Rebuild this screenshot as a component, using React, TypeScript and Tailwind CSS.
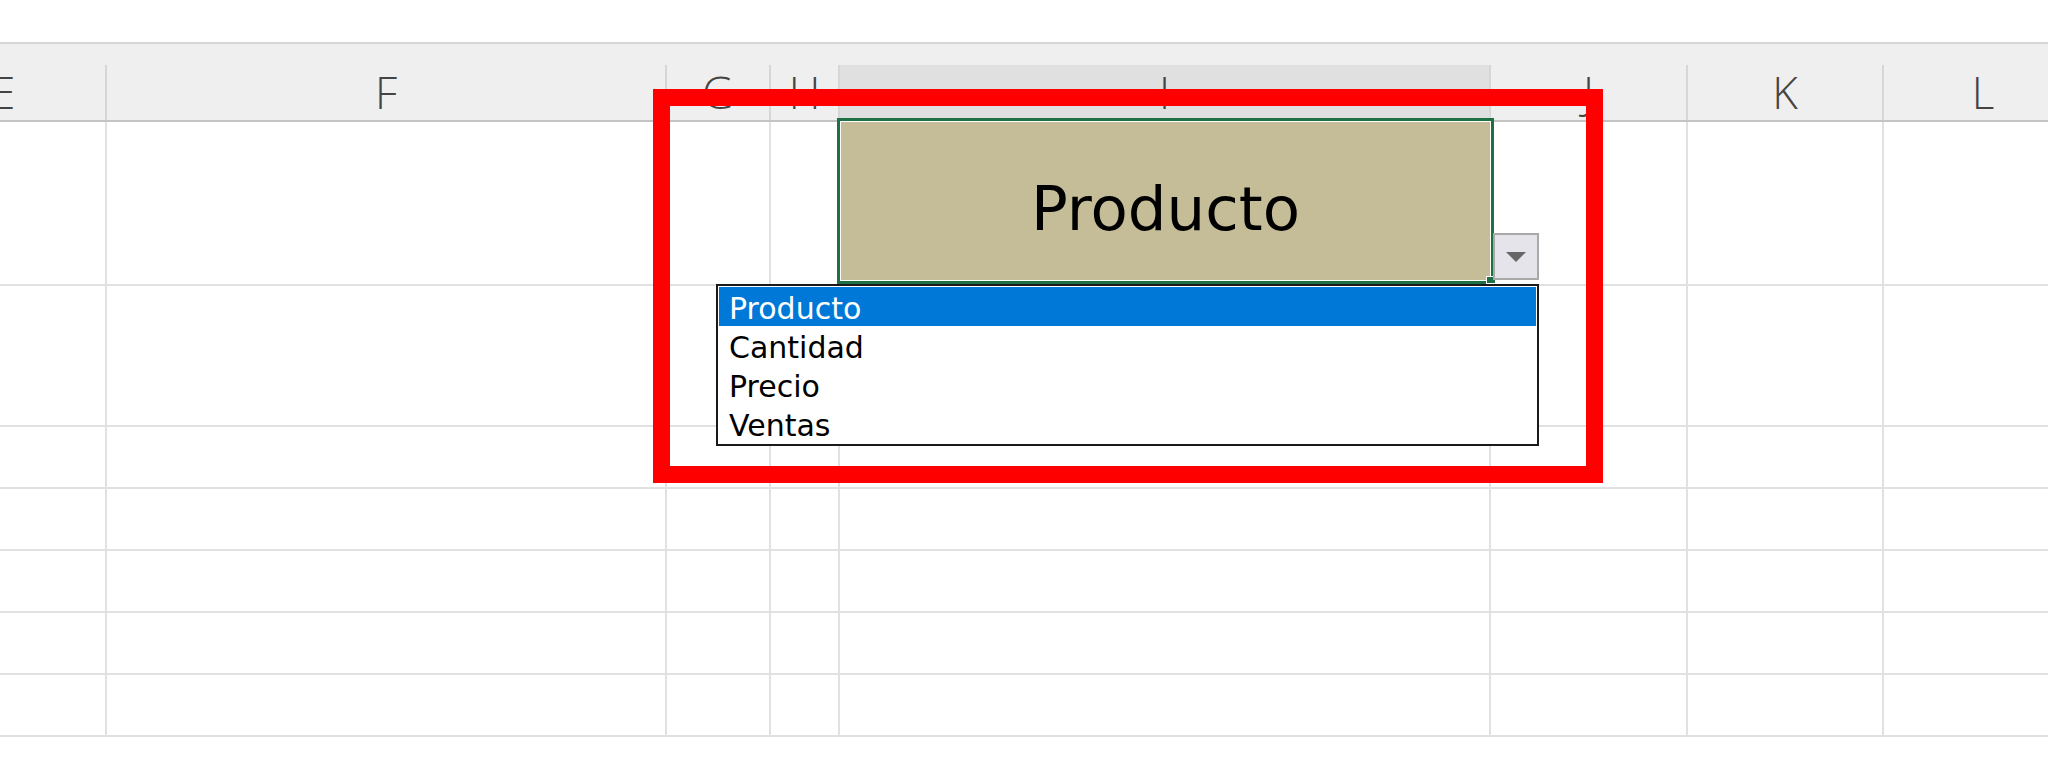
const columns = [
  { name: "E", width: "w-[107px]" },
  { name: "F", width: "w-[560px]" },
  { name: "G", width: "w-[104px]" },
  { name: "H", width: "w-[69px]" },
  { name: "I", width: "w-[651px]" },
  { name: "J", width: "w-[197px]" },
  { name: "K", width: "w-[196px]" },
  { name: "L", width: "w-[200px]" },
];

const rowHeights = ["h-[164px]", "h-[141px]", "h-[62px]", "h-[62px]", "h-[62px]", "h-[62px]", "h-[62px]"];

const options = ["Producto", "Cantidad", "Precio", "Ventas"];

function DropdownList() {
  return (
    <div className="absolute left-[-124px] top-[162px] z-20 w-[823px] h-[162px] border-2 border-[#1a1a1a] bg-white p-[1px] font-['DejaVu_Sans',sans-serif] text-[30px] text-black">
      {options.map((opt, i) => (
        <div
          key={opt}
          className={`h-[39px] pl-[10px] leading-[44px] ${i === 0 ? "bg-[#0078d7] text-white" : ""}`}
        >
          {opt}
        </div>
      ))}
    </div>
  );
}

function SelectedCell() {
  return (
    <>
      <div className="absolute left-[-3px] top-[-4px] z-10 w-[657px] h-[166px] border-[3px] border-[#1e7145]">
        <div className="h-full w-full border border-white bg-[#c4bd97] flex items-center justify-center pt-[14px] font-['DejaVu_Sans',sans-serif] text-[61px] leading-none text-black">
          Producto
        </div>
        <div className="absolute right-[-5px] bottom-[-3px] w-[10px] h-[8px] bg-[#1e7145] border border-white" />
      </div>
      {/* validation arrow */}
      <div className="absolute left-[653px] top-[111px] z-10 w-[46px] h-[47px] border-2 border-[#a9a9a9] bg-[#e4e4ea] flex items-center justify-center">
        <svg width="20" height="10" viewBox="0 0 20 10">
          <path d="M0 0 H20 L10 10 Z" fill="#666" />
        </svg>
      </div>
      <DropdownList />
    </>
  );
}

export default function App() {
  return (
    <div className="relative w-[2048px] h-[779px] overflow-hidden bg-white">
      <div className="h-[42px]" />
      {/* column headers */}
      <div className="flex h-[80px] border-t-2 border-b-2 border-t-[#d6d6d6] border-b-[#c4c4c4] bg-[#efefef] items-end font-['Open_Sans',sans-serif] font-light text-[44px] text-[#444]">
        {columns.map((col) => (
          <div
            key={col.name}
            className={`${col.width} shrink-0 h-[55px] border-r-2 border-[#d6d6d6] leading-[55px] ${
              col.name === "E" ? "text-left" : "text-center"
            } ${col.name === "I" ? "bg-[#e0e0e0]" : ""}`}
          >
            <span className={col.name === "E" ? "-ml-[9px]" : ""}>{col.name}</span>
          </div>
        ))}
      </div>
      {/* cells */}
      {rowHeights.map((h, r) => (
        <div key={r} className={`flex ${h}`}>
          {columns.map((col) => (
            <div
              key={col.name}
              className={`${col.width} shrink-0 relative border-r-2 border-b-2 border-[#e1e1e1]`}
            >
              {r === 0 && col.name === "I" && <SelectedCell />}
            </div>
          ))}
        </div>
      ))}
      {/* red annotation box */}
      <div className="absolute left-[653px] top-[89px] z-30 w-[950px] h-[394px] border-[17px] border-[#ff0000]" />
    </div>
  );
}
